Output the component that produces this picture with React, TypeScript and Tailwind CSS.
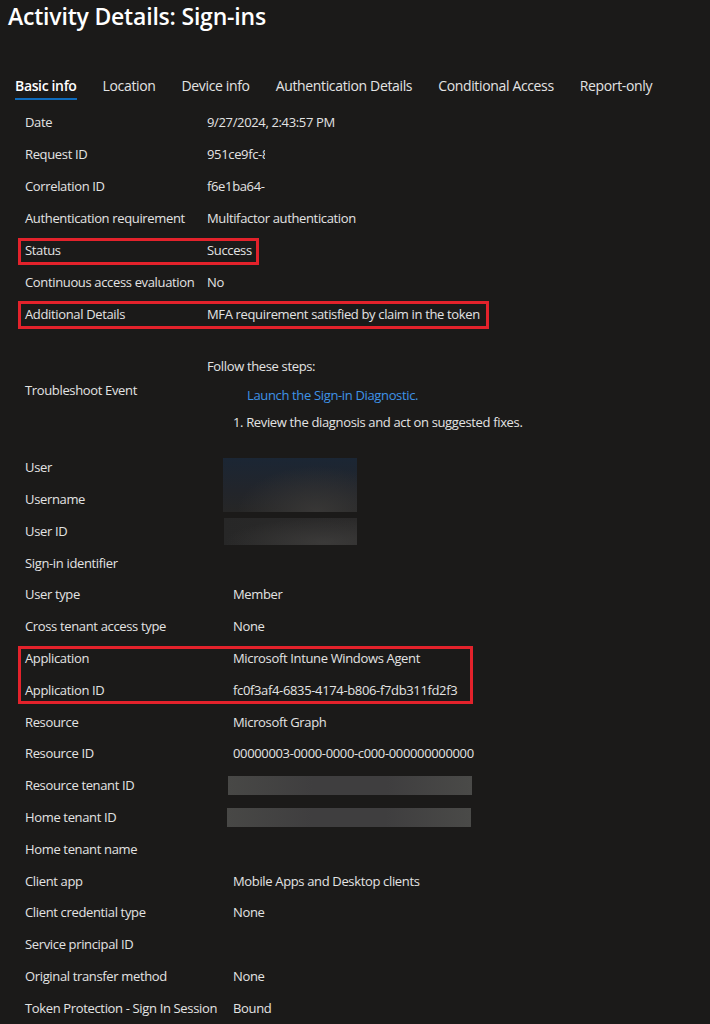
import React from 'react';

type Row = { label: string; value?: React.ReactNode };

const font = { fontFamily: '"Open Sans", "Noto Sans", sans-serif' };

const tabs = ['Basic info', 'Location', 'Device info', 'Authentication Details', 'Conditional Access', 'Report-only'];

function DetailRow({ label, value }: Row) {
    return (
        <div className="flex h-[32px] items-center text-[13px] tracking-[-0.35px] text-[#e3e3e3]">
            <div className="w-[182px] shrink-0 whitespace-nowrap">{label}</div>
            <div className="whitespace-nowrap">{value}</div>
        </div>
    );
}

function WideRow({ label, value }: Row) {
    return (
        <div className="flex h-[31.8px] items-center text-[13px] tracking-[-0.35px] text-[#e3e3e3]">
            <div className="w-[208px] shrink-0 whitespace-nowrap">{label}</div>
            <div className="whitespace-nowrap">{value}</div>
        </div>
    );
}

function RedBox({ className }: { className: string }) {
    return <div className={`pointer-events-none absolute border-[3px] border-[#e3222b] ${className}`} />;
}

export default function App() {
    return (
        <div className="min-h-screen w-full bg-[#1b1a19] text-[#e3e3e3]" style={font}>
            <h1 className="pl-[8px] text-[23px] font-semibold leading-[32px] tracking-[-0.2px] text-white">
                Activity Details: Sign-ins
            </h1>

            {/* tabs */}
            <div className="mt-[36px] flex gap-[26px] pl-[15px]">
                {tabs.map((t, i) => (
                    <div
                        key={t}
                        className={`flex h-[32px] items-center whitespace-nowrap border-b-2 pt-[4px] text-[14px] tracking-[-0.35px] ${
                            i === 0 ? 'border-[#0f6cbd] font-semibold text-white' : 'border-transparent text-[#e3e3e3]'
                        }`}
                    >
                        {t}
                    </div>
                ))}
            </div>

            <div className="mt-[7px] pl-[25px]">
                <DetailRow label="Date" value="9/27/2024, 2:43:57 PM" />
                <DetailRow label="Request ID" value={<div className="w-[58px] overflow-hidden">951ce9fc-8</div>} />
                <DetailRow label="Correlation ID" value="f6e1ba64-" />
                <DetailRow label="Authentication requirement" value="Multifactor authentication" />
                <div className="relative">
                    <DetailRow label="Status" value="Success" />
                    <RedBox className="left-[-7px] top-[3px] h-[27px] w-[241px]" />
                </div>
                <DetailRow label="Continuous access evaluation" value="No" />
                <div className="relative">
                    <DetailRow label="Additional Details" value="MFA requirement satisfied by claim in the token" />
                    <RedBox className="left-[-7px] top-[2px] h-[28px] w-[471px]" />
                </div>

                {/* troubleshoot */}
                <div className="flex pt-[25px] text-[13px] tracking-[-0.35px]">
                    <div className="w-[182px] shrink-0 pt-[24px] leading-[20px]">Troubleshoot Event</div>
                    <div className="leading-[20px]">
                        <div>Follow these steps:</div>
                        <div className="mt-[9px] pl-[40px] text-[#3f93e6]">Launch the Sign-in Diagnostic.</div>
                        <div className="mt-[7px] pl-[26px]">1. Review the diagnosis and act on suggested fixes.</div>
                    </div>
                </div>

                <div className="mt-[20px]">
                    <div className="relative">
                        <WideRow label="User" />
                        <WideRow label="Username" />
                        <div className="absolute left-[198px] top-[6px] h-[54px] w-[134px] bg-[radial-gradient(ellipse_at_70%_100%,#383736_0%,transparent_60%),linear-gradient(180deg,#1b2634_0%,#22252b_60%,#262626_100%)]" />
                    </div>
                    <WideRow
                        label="User ID"
                        value={
                            <div className="ml-[-9px] h-[27px] w-[133px] bg-[radial-gradient(ellipse_at_75%_90%,#3b3a39_0%,transparent_70%),linear-gradient(90deg,#272727,#2b2a2a)]" />
                        }
                    />
                    <WideRow label="Sign-in identifier" />
                    <WideRow label="User type" value="Member" />
                    <WideRow label="Cross tenant access type" value="None" />
                    <div className="relative">
                        <WideRow label="Application" value="Microsoft Intune Windows Agent" />
                        <WideRow label="Application ID" value="fc0f3af4-6835-4174-b806-f7db311fd2f3" />
                        <RedBox className="left-[-7px] top-[3px] h-[58px] w-[455px]" />
                    </div>
                    <WideRow label="Resource" value="Microsoft Graph" />
                    <WideRow label="Resource ID" value="00000003-0000-0000-c000-000000000000" />
                    <WideRow
                        label="Resource tenant ID"
                        value={
                            <div className="ml-[-5px] h-[19px] w-[244px] bg-[linear-gradient(90deg,#484846,#3f3e3f_35%,#3f3e3f_65%,#4a4a48)]" />
                        }
                    />
                    <WideRow
                        label="Home tenant ID"
                        value={
                            <div className="ml-[-6px] h-[19px] w-[244px] bg-[linear-gradient(90deg,#484846,#3f3e3f_35%,#3f3e3f_65%,#4a4a48)]" />
                        }
                    />
                    <WideRow label="Home tenant name" />
                    <WideRow label="Client app" value="Mobile Apps and Desktop clients" />
                    <WideRow label="Client credential type" value="None" />
                    <WideRow label="Service principal ID" />
                    <WideRow label="Original transfer method" value="None" />
                    <WideRow label="Token Protection - Sign In Session" value="Bound" />
                </div>
            </div>
        </div>
    );
}
